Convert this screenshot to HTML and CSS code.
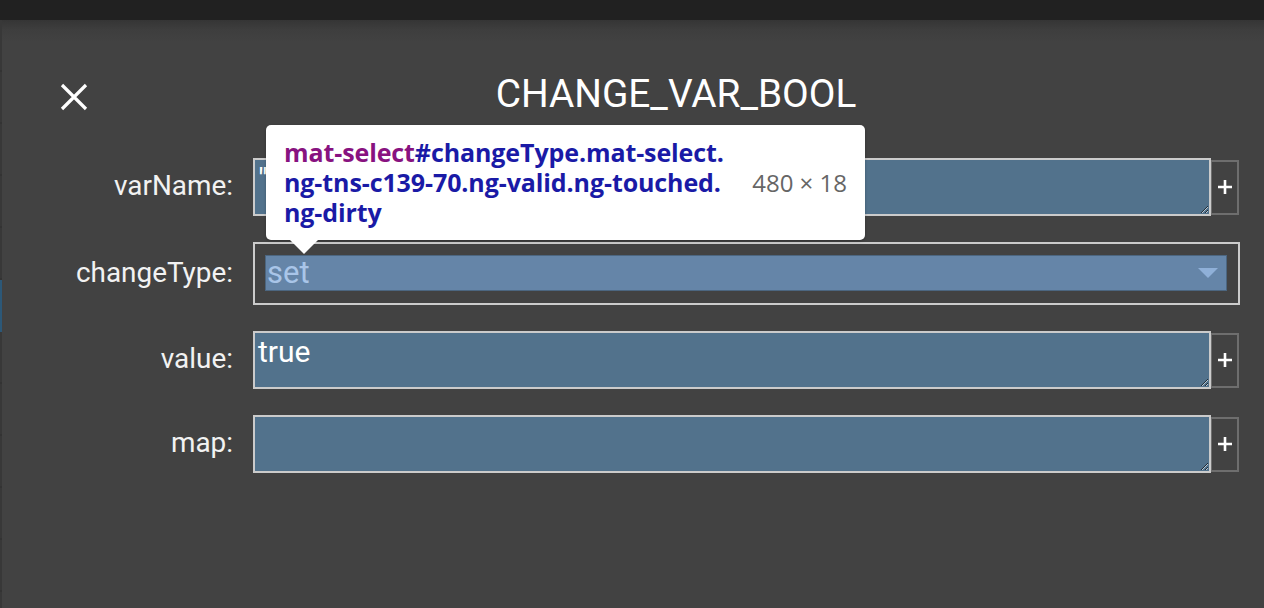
FILE: index.html
```html
<!DOCTYPE html>
<html>
<head>
<meta charset="utf-8">
<link rel="stylesheet" href="styles.css">
</head>
<body>
<div class="topbar"></div>
<div class="main">
  <div class="edge"><span class="edge-active"></span></div>
  <div class="dialog">
    <div class="header">
      <button class="close" aria-label="close">
        <svg width="28" height="28" viewBox="0 0 28 28"><path d="M2 2 L26 26 M26 2 L2 26" stroke="#fff" stroke-width="3.2" fill="none"/></svg>
      </button>
      <h1 class="title">CHANGE_VAR_BOOL</h1>
    </div>
    <div class="form">
      <div class="row">
        <label class="label">varName:</label>
        <div class="field">
          <textarea class="ta">""</textarea>
          <button class="plus" aria-label="add"><svg width="14" height="14" viewBox="0 0 14 14"><path d="M7 0 V14 M0 7 H14" stroke="#fff" stroke-width="2.6"/></svg></button>
        </div>
      </div>
      <div class="row">
        <label class="label">changeType:</label>
        <div class="selectbox">
          <div class="select"><span class="sel-value">set</span><span class="arrow"></span></div>
          <div class="tooltip">
            <div class="tt-sel"><span class="tt-tag">mat-select</span>#changeType.mat-select.<br>ng-tns-c139-70.ng-valid.ng-touched.<br>ng-dirty</div>
            <div class="tt-size">480 × 18</div>
          </div>
        </div>
      </div>
      <div class="row">
        <label class="label">value:</label>
        <div class="field">
          <textarea class="ta">true</textarea>
          <button class="plus" aria-label="add"><svg width="14" height="14" viewBox="0 0 14 14"><path d="M7 0 V14 M0 7 H14" stroke="#fff" stroke-width="2.6"/></svg></button>
        </div>
      </div>
      <div class="row">
        <label class="label">map:</label>
        <div class="field">
          <textarea class="ta"></textarea>
          <button class="plus" aria-label="add"><svg width="14" height="14" viewBox="0 0 14 14"><path d="M7 0 V14 M0 7 H14" stroke="#fff" stroke-width="2.6"/></svg></button>
        </div>
      </div>
    </div>
  </div>
</div>
</body>
</html>
```
FILE: styles.css
```css
html, body {
  margin: 0;
  padding: 0;
  height: 100%;
  overflow: hidden;
}
body {
  background: #424242;
  font-family: Roboto, "Liberation Sans", sans-serif;
  color: #fff;
}
.topbar {
  height: 20px;
  background: #212121;
}
.main {
  display: flex;
  height: 588px;
  background: linear-gradient(#353535 0px, #3e3e3e 10px, #424242 22px);
}
.edge {
  width: 2px;
  background: repeating-linear-gradient(#383838 0px, #383838 50px, #333 50px, #333 52px);
  position: relative;
}
.edge-active {
  position: absolute;
  left: 0;
  top: 260px;
  width: 2px;
  height: 52px;
  background: #2c5878;
}
.dialog {
  flex: 1;
  display: flex;
  flex-direction: column;
}
.header {
  display: flex;
  align-items: center;
  padding-top: 54px;
  height: 40px;
}
.close {
  margin-left: 58px;
  width: 28px;
  height: 28px;
  padding: 0;
  border: 0;
  background: none;
  display: flex;
  margin-top: 6px;
}
.title {
  flex: 1;
  margin: 0;
  text-align: center;
  font-weight: 400;
  font-size: 38.8px;
  line-height: 40px;
}
.form {
  margin-top: 44px;
  display: flex;
  flex-direction: column;
  gap: 26px;
}
.row {
  display: flex;
  align-items: center;
  gap: 20px;
}
.label {
  width: 231px;
  text-align: right;
  font-size: 27.9px;
  color: #f2f2f2;
  margin-top: -3px;
}
.field {
  display: flex;
  align-items: center;
}
.ta {
  box-sizing: border-box;
  width: 958px;
  height: 58px;
  margin: 0;
  border: 2px solid #cbcbcb;
  background: #52728c;
  color: #fff;
  font-family: Roboto, "Liberation Sans", sans-serif;
  font-size: 30px;
  line-height: 32px;
  padding: 3px 3px;
  resize: vertical;
  overflow: hidden;
  display: block;
  color-scheme: dark;
}
.plus {
  box-sizing: border-box;
  width: 28px;
  height: 55px;
  border: 2px solid #6e6e6e;
  border-left-width: 1px;
  background: transparent;
  padding: 0;
  display: flex;
  align-items: center;
  justify-content: center;
}
.selectbox {
  box-sizing: border-box;
  width: 987px;
  height: 63px;
  border: 2px solid #cbcbcb;
  padding: 11px 11px 12px 10px;
  position: relative;
}
.select {
  box-sizing: border-box;
  height: 36px;
  border: 1px solid #4c6680;
  background: #6585a8;
  display: flex;
  align-items: center;
  justify-content: space-between;
  padding: 0 8px 0 1px;
}
.sel-value {
  color: #a9c5e8;
  font-size: 31px;
  line-height: 34px;
}
.arrow {
  width: 0;
  height: 0;
  border-left: 10px solid transparent;
  border-right: 10px solid transparent;
  border-top: 10px solid #8fb0d8;
}
.tooltip {
  position: absolute;
  left: 11px;
  top: -119px;
  width: 599px;
  box-sizing: border-box;
  background: #fff;
  border-radius: 5px;
  padding: 12px 18px 13px 18px;
  display: flex;
  align-items: center;
  justify-content: space-between;
  box-shadow: 0 1px 3px rgba(0,0,0,0.25);
}
.tooltip::after {
  content: "";
  position: absolute;
  left: 24px;
  bottom: -14px;
  border-left: 14px solid transparent;
  border-right: 14px solid transparent;
  border-top: 14px solid #fff;
}
.tt-sel {
  font-family: "Open Sans", "DejaVu Sans", sans-serif;
  font-weight: 700;
  font-size: 25px;
  line-height: 30px;
  letter-spacing: -0.1px;
  color: #1a1aa6;
}
.tt-tag {
  color: #881280;
}
.tt-size {
  font-family: "Open Sans", "DejaVu Sans", sans-serif;
  font-size: 24px;
  color: #666;
}
```
